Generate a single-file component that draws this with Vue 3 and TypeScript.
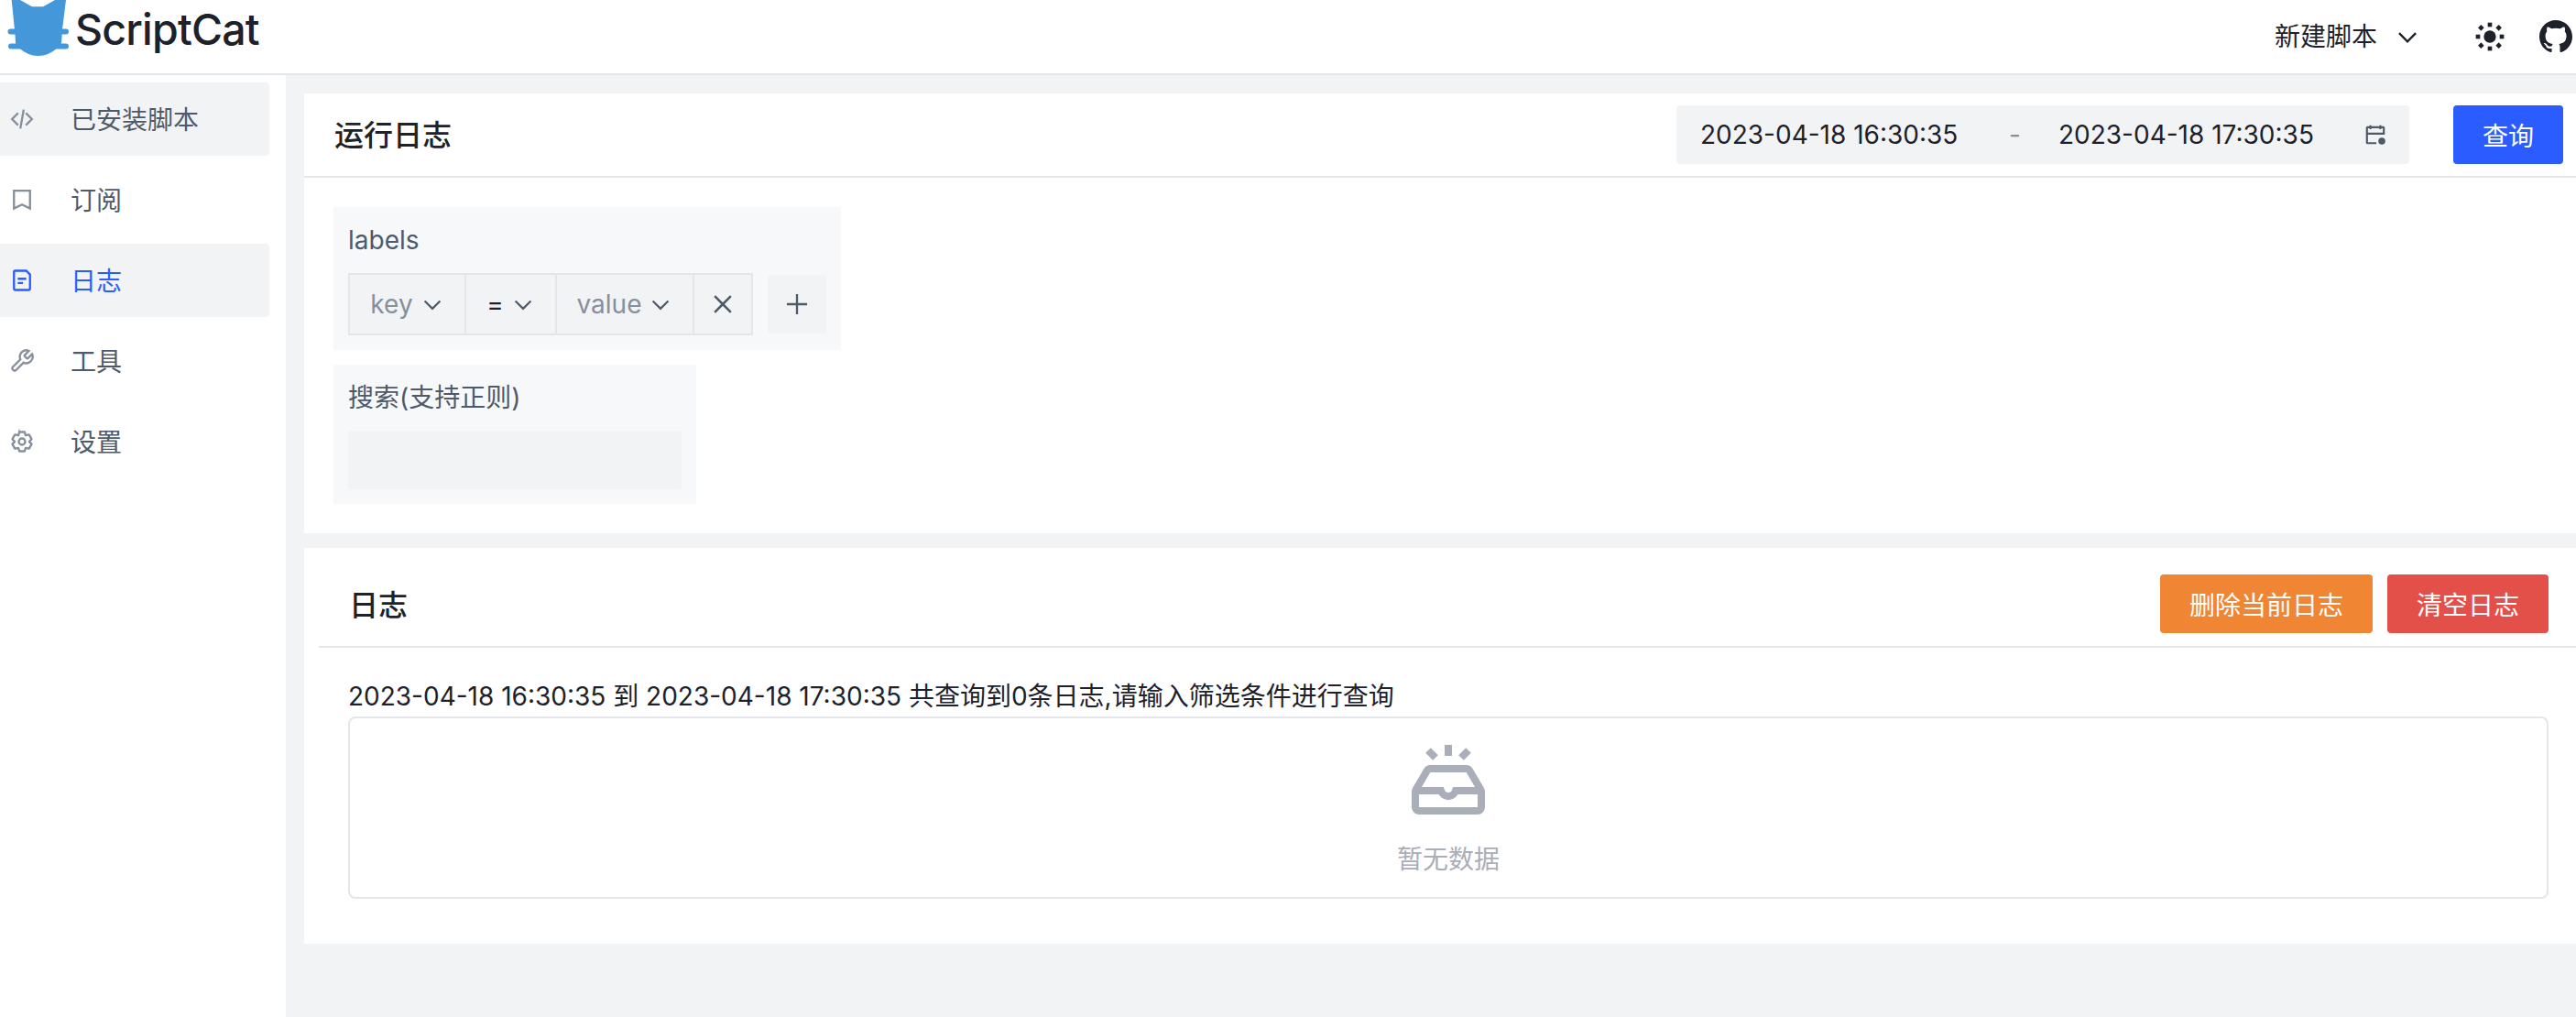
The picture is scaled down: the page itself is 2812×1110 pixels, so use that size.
<script setup lang="ts">
interface MenuItem {
  label: string
  active?: boolean
  selected?: boolean
  thin?: boolean
  box: string
  paths: string[]
}

const menu: MenuItem[] = [
  {
    label: '已安装脚本',
    selected: true,
    box: '0 0 48 48',
    paths: ['M16.734 12.686 5.42 24l11.314 11.314m14.521-22.628L42.57 24 31.255 35.314M27.2 6.28l-6.251 35.453'],
  },
  {
    label: '订阅',
    box: '0 0 48 48',
    paths: ['M9 7h30v33.5L24 33 9 40.5Z'],
  },
  {
    label: '日志',
    active: true,
    selected: true,
    box: '0 0 48 48',
    paths: ['M16 21h16m-16 8h10m11 13H11a2 2 0 0 1-2-2V8a2 2 0 0 1 2-2h21l7 7v27a2 2 0 0 1-2 2Z'],
  },
  {
    label: '工具',
    thin: true,
    box: '0 0 24 24',
    paths: ['M14.7 6.3a1 1 0 0 0 0 1.4l1.6 1.6a1 1 0 0 0 1.4 0l3.77-3.77a6 6 0 0 1-7.94 7.94l-6.91 6.91a2.12 2.12 0 0 1-3-3l6.91-6.91a6 6 0 0 1 7.94-7.94l-3.76 3.76z'],
  },
  {
    label: '设置',
    box: '0 0 48 48',
    paths: [
      'M18.797 6.732A1 1 0 0 1 19.76 6h8.48a1 1 0 0 1 .964.732l1.285 4.628a1 1 0 0 0 1.213.7l4.651-1.2a1 1 0 0 1 1.102.468l4.24 7.344a1 1 0 0 1-.138 1.2l-3.365 3.43a1 1 0 0 0 0 1.4l3.365 3.43a1 1 0 0 1 .138 1.2l-4.24 7.344a1 1 0 0 1-1.102.468l-4.65-1.2a1 1 0 0 0-1.214.7l-1.285 4.628a1 1 0 0 1-.964.732h-8.48a1 1 0 0 1-.963-.732L17.51 36.64a1 1 0 0 0-1.213-.7l-4.65 1.2a1 1 0 0 1-1.102-.468l-4.24-7.344a1 1 0 0 1 .138-1.2l3.365-3.43a1 1 0 0 0 0-1.4l-3.365-3.43a1 1 0 0 1-.138-1.2l4.24-7.344a1 1 0 0 1 1.102-.468l4.65 1.2a1 1 0 0 0 1.213-.7l1.286-4.628Z',
      'M30 24a6 6 0 1 1-12 0 6 6 0 0 1 12 0Z',
    ],
  },
]

const startTime = '2023-04-18 16:30:35'
const endTime = '2023-04-18 17:30:35'
const chevron = 'M39.6 17.443 24.043 33 8.487 17.443'
</script>

<template>
  <div class="page">
    <header class="topbar">
      <div class="brand">
        <svg class="logo" viewBox="0 0 80 64" width="80" height="64">
          <path d="M12.7 0H22L35 7.3H47L60 0H72L68 32L67 47L63 52Q53 61 42 61Q30 61 20.5 52L17 47L16.5 38Z" />
          <path class="whisker" d="M11.5 34.5H72M12 50.5H72" />
        </svg>
        <span class="brand-name">ScriptCat</span>
      </div>
      <div class="top-actions">
        <span class="new-script">新建脚本</span>
        <svg class="icon chevron-top" viewBox="0 0 48 48"><path :d="chevron" /></svg>
        <svg class="sun" viewBox="0 0 48 48">
          <circle cx="24" cy="24" r="10" />
          <rect x="20.5" y="1" width="7" height="7" />
          <rect x="20.5" y="40" width="7" height="7" />
          <rect x="1" y="20.5" width="7" height="7" />
          <rect x="40" y="20.5" width="7" height="7" />
          <rect x="6" y="6" width="7" height="7" transform="rotate(45 9.5 9.5)" />
          <rect x="35" y="6" width="7" height="7" transform="rotate(45 38.5 9.5)" />
          <rect x="6" y="35" width="7" height="7" transform="rotate(45 9.5 38.5)" />
          <rect x="35" y="35" width="7" height="7" transform="rotate(45 38.5 38.5)" />
        </svg>
        <svg class="github" viewBox="0 0 16 16">
          <path d="M8 0C3.58 0 0 3.58 0 8c0 3.54 2.29 6.53 5.47 7.59.4.07.55-.17.55-.38 0-.19-.01-.82-.01-1.49-2.01.37-2.53-.49-2.69-.94-.09-.23-.48-.94-.82-1.13-.28-.15-.68-.52-.01-.53.63-.01 1.08.58 1.23.82.72 1.21 1.87.87 2.33.66.07-.52.28-.87.51-1.07-1.78-.2-3.64-.89-3.64-3.95 0-.87.31-1.59.82-2.15-.08-.2-.36-1.02.08-2.12 0 0 .67-.21 2.2.82.64-.18 1.32-.27 2-.27.68 0 1.36.09 2 .27 1.53-1.04 2.2-.82 2.2-.82.44 1.1.16 1.92.08 2.12.51.56.82 1.27.82 2.15 0 3.07-1.87 3.75-3.65 3.95.29.25.54.73.54 1.48 0 1.07-.01 1.93-.01 2.2 0 .21.15.46.55.38A8.013 8.013 0 0016 8c0-4.42-3.58-8-8-8z" />
        </svg>
      </div>
    </header>

    <div class="layout">
      <aside class="sidebar">
        <div v-for="item in menu" :key="item.label" class="menu-item" :class="{ active: item.active, selected: item.selected }">
          <svg class="icon menu-icon" :class="{ thin: item.thin }" :viewBox="item.box">
            <path v-for="p in item.paths" :key="p" :d="p" />
          </svg>
          <span class="menu-label">{{ item.label }}</span>
        </div>
      </aside>

      <main class="content">
        <section class="card query-card">
          <div class="query-head">
            <span class="card-title query-title">运行日志</span>
            <div class="range">
              <span class="range-value">{{ startTime }}</span>
              <span class="range-sep">-</span>
              <span class="range-value">{{ endTime }}</span>
              <svg class="icon range-icon" viewBox="0 0 48 48">
                <path d="M7 22h34V10a1 1 0 0 0-1-1H8a1 1 0 0 0-1 1v30a1 1 0 0 0 1 1h18M34 5v8M14 5v8" />
                <circle class="dot" cx="37" cy="37" r="7" />
              </svg>
            </div>
            <button class="btn btn-primary query-btn">查询</button>
          </div>
          <div class="query-body">
            <div class="field labels-field">
              <div class="field-label">labels</div>
              <div class="label-row">
                <div class="label-group">
                  <div class="cell cell-key"><span class="muted">key</span><svg class="icon cell-chevron" viewBox="0 0 48 48"><path :d="chevron" /></svg></div>
                  <div class="cell cell-op"><span class="op">=</span><svg class="icon cell-chevron" viewBox="0 0 48 48"><path :d="chevron" /></svg></div>
                  <div class="cell cell-value"><span class="muted">value</span><svg class="icon cell-chevron" viewBox="0 0 48 48"><path :d="chevron" /></svg></div>
                  <div class="cell cell-close"><svg class="icon close-mark" viewBox="0 0 48 48"><path d="M9.857 9.858 24 24m0 0 14.142 14.142M24 24 38.142 9.858M24 24 9.857 38.142" /></svg></div>
                </div>
                <div class="add-btn"><svg class="icon plus-mark" viewBox="0 0 48 48"><path d="M5 24h38M24 5v38" /></svg></div>
              </div>
            </div>
            <div class="field search-field">
              <div class="field-label">搜索(支持正则)</div>
              <div class="search-input"></div>
            </div>
          </div>
        </section>

        <section class="card log-card">
          <div class="log-head">
            <span class="card-title log-title">日志</span>
            <div class="log-actions">
              <button class="btn btn-warning">删除当前日志</button>
              <button class="btn btn-danger">清空日志</button>
            </div>
          </div>
          <div class="log-body">
            <div class="log-summary">{{ startTime }} 到 {{ endTime }} 共查询到0条日志,请输入筛选条件进行查询</div>
            <div class="empty-box">
              <svg class="icon empty-icon" viewBox="0 0 48 48">
                <path d="M24 5v6m7 1 4-4m-18 4-4-4m27 33H8a2 2 0 0 1-2-2v-8.46a2 2 0 0 1 .272-1.007l6.15-10.54A2 2 0 0 1 14.148 18H33.85a2 2 0 0 1 1.728.992l6.149 10.541A2 2 0 0 1 42 30.541V39a2 2 0 0 1-2 2Z" />
                <path d="M41.5 30H28s-1 3-4 3-4-3-4-3H6.5" />
              </svg>
              <span class="empty-text">暂无数据</span>
            </div>
          </div>
        </section>
      </main>
    </div>
  </div>
</template>

<style>
html,
body {
  margin: 0;
  background: #f2f3f5;
}
</style>

<style scoped>
.page {
  height: 1110px;
  display: flex;
  flex-direction: column;
  overflow: hidden;
  background: #f2f3f5;
  color: #1d2129;
  font-family: Inter, "Noto Sans CJK SC", sans-serif;
  font-size: 28px;
}

.icon {
  fill: none;
  stroke: currentColor;
  stroke-width: 4;
  flex: none;
}

.topbar {
  height: 82px;
  box-sizing: border-box;
  flex: none;
  display: flex;
  align-items: center;
  justify-content: space-between;
  background: #fff;
  border-bottom: 2px solid #e5e6eb;
}

.brand {
  display: flex;
  align-items: center;
  height: 64px;
  align-self: flex-start;
}

.logo {
  fill: #4497d8;
  flex: none;
}

.whisker {
  fill: none;
  stroke: #4497d8;
  stroke-width: 6;
  stroke-linecap: round;
}

.brand-name {
  margin-left: 2px;
  font-size: 46.5px;
  font-weight: 500;
  line-height: 64px;
  letter-spacing: -0.8px;
}

.top-actions {
  display: flex;
  align-items: center;
  padding-right: 4px;
}

.new-script {
  line-height: 36px;
}

.chevron-top {
  width: 28px;
  height: 28px;
  margin-left: 19px;
}

.sun {
  width: 32px;
  height: 32px;
  margin-left: 60px;
  fill: #1d2129;
}

.github {
  width: 36px;
  height: 36px;
  margin-left: 38px;
  fill: #1d2129;
}

.layout {
  flex: 1;
  display: flex;
  min-height: 0;
}

.sidebar {
  width: 312px;
  flex: none;
  background: #fff;
  padding: 8px 18px 0 0;
  box-sizing: border-box;
  display: flex;
  flex-direction: column;
  gap: 8px;
}

.menu-item {
  height: 80px;
  display: flex;
  align-items: center;
  padding-left: 10px;
  border-radius: 0 4px 4px 0;
  color: #4e5969;
}

.menu-item.selected {
  background: #f2f3f5;
}

.menu-item.active {
  color: #2b5cff;
}

.menu-icon {
  width: 28px;
  height: 28px;
  margin-right: 39px;
  color: #86909c;
}

.menu-icon.thin {
  stroke-width: 2;
}

.active .menu-icon {
  color: #2b5cff;
}

.menu-label {
  margin-bottom: 2px;
}

.content {
  flex: 1;
  min-width: 0;
  padding: 20px 0 0 20px;
  display: flex;
  flex-direction: column;
  gap: 16px;
}

.card {
  background: #fff;
}

.card-title {
  font-size: 32px;
  font-weight: 500;
}

.query-card {
  height: 480px;
}

.query-head {
  height: 92px;
  box-sizing: border-box;
  display: flex;
  align-items: center;
  padding: 0 14px 0 33px;
  border-bottom: 2px solid #e5e6eb;
}

.query-title {
  margin-bottom: 4px;
}

.range {
  margin-left: auto;
  width: 800px;
  height: 64px;
  box-sizing: border-box;
  display: flex;
  align-items: center;
  padding-left: 26px;
  background: #f2f3f5;
  border-radius: 4px;
}

.range-value {
  width: 280px;
  white-space: nowrap;
}

.range-sep {
  width: 111px;
  box-sizing: border-box;
  padding-left: 16px;
  text-align: center;
  color: #86909c;
}

.range-icon {
  width: 26px;
  height: 26px;
  margin-left: 53px;
  color: #4e5969;
}

.dot {
  fill: currentColor;
  stroke: none;
}

.btn {
  height: 64px;
  border: 0;
  border-radius: 4px;
  color: #fff;
  font: inherit;
  padding: 0;
}

.btn-primary {
  background: #2b5cff;
}

.query-btn {
  width: 120px;
  margin-left: 48px;
}

.query-body {
  padding: 32px;
  display: flex;
  flex-direction: column;
  align-items: flex-start;
  gap: 16px;
}

.field {
  background: #f7f8fa;
  padding: 16px;
  box-sizing: border-box;
  color: #4e5969;
}

.field-label {
  height: 40px;
  line-height: 40px;
}

.labels-field {
  width: 554px;
  height: 156px;
}

.label-row {
  display: flex;
  align-items: center;
  margin-top: 16px;
  gap: 16px;
}

.label-group {
  display: flex;
  height: 68px;
  box-sizing: border-box;
  border: 2px solid #e5e6eb;
}

.cell {
  height: 100%;
  display: flex;
  align-items: center;
  justify-content: center;
  gap: 8px;
  box-sizing: border-box;
  background: #f2f3f5;
  border-right: 2px solid #e5e6eb;
}

.cell:last-child {
  border-right: 0;
}

.cell-key {
  width: 127px;
}

.cell-op {
  width: 99px;
}

.cell-value {
  width: 150px;
}

.cell-close {
  width: 62px;
}

.muted {
  color: #86909c;
}

.op {
  color: #1d2129;
}

.cell-chevron {
  width: 26px;
  height: 26px;
}

.close-mark {
  width: 30px;
  height: 30px;
}

.plus-mark {
  width: 28px;
  height: 28px;
}

.add-btn {
  width: 64px;
  height: 64px;
  display: flex;
  align-items: center;
  justify-content: center;
  background: #f2f3f5;
  border-radius: 4px;
  color: #4e5969;
}

.search-field {
  width: 396px;
  height: 152px;
}

.search-input {
  height: 64px;
  margin-top: 16px;
  background: #f2f3f5;
  border-radius: 4px;
}

.log-card {
  height: 432px;
  padding-left: 16px;
}

.log-head {
  height: 109px;
  box-sizing: border-box;
  display: flex;
  align-items: flex-start;
  justify-content: space-between;
  padding: 29px 30px 0 33px;
  border-bottom: 2px solid #e5e6eb;
}

.log-title {
  line-height: 64px;
  margin-top: 2px;
}

.log-actions {
  display: flex;
  gap: 16px;
}

.btn-warning {
  width: 232px;
  background: #f08533;
}

.btn-danger {
  width: 176px;
  background: #e3504a;
}

.log-body {
  padding: 0 30px 0 32px;
}

.log-summary {
  height: 75px;
  padding-top: 36px;
  box-sizing: border-box;
  line-height: 34px;
  white-space: nowrap;
}

.empty-box {
  height: 199px;
  box-sizing: border-box;
  border: 2px solid #e5e6eb;
  border-radius: 8px;
  display: flex;
  flex-direction: column;
  align-items: center;
  color: #a9aeb8;
}

.empty-icon {
  width: 96px;
  height: 96px;
  margin-top: 19px;
  color: #a9aeb8;
}

.empty-text {
  margin-top: 21px;
  line-height: 36px;
}
</style>
